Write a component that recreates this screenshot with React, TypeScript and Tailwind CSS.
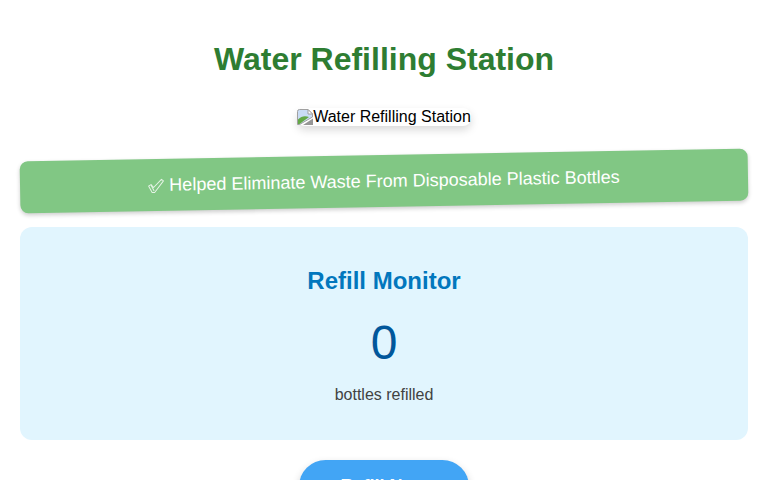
import React from 'react';

const BrokenImageIcon: React.FC = () => (
  <svg width="16" height="16" viewBox="0 0 16 16" className="inline-block align-[-3px]">
    <path d="M0.500 2.500a2 2 0 0 1 2-2H11l4.500 4.500v3L2.500 15.500H0.500z" fill="#c9dcf5" stroke="#a0a0a0" strokeWidth="1" />
    <path d="M1 10.500c3.500-3.500 7-4 11-2.500l-9.500 7H1z" fill="#63a845" />
    <path d="M11 0.500V5h4.500z" fill="#ffffff" stroke="#a0a0a0" strokeWidth="1" />
    <path d="M16 9.500V16H6z" fill="#969696" />
  </svg>
);

const OutlineCheckIcon: React.FC = () => (
  <svg width="16" height="16" viewBox="0 0 16 16" fill="none" stroke="#ffffff" strokeWidth="1" strokeLinejoin="round" className="inline-block align-[-3px] opacity-80">
    <path d="M0.500 8l2.500-1.500 2.500 3L13.500 1.500l2 1.500L6.500 14.500H4z" />
    <path d="M3 7l3 6" />
  </svg>
);

export default function App() {
  return (
    <div className="bg-white p-5 font-['Liberation_Sans',Arial,sans-serif] text-center">
      <h1 className="mt-[21px] mb-[27px] text-[32px] leading-[37px] font-bold text-[#2e7d32]">
        Water Refilling Station
      </h1>

      <div className="inline-block rounded-lg text-base leading-[18px] text-black shadow-[0_4px_8px_rgba(0,0,0,0.15)]">
        <BrokenImageIcon />
        Water Refilling Station
      </div>

      <div className="mt-[26px] -rotate-1 rounded-lg bg-[#81c784] py-[15.5px] text-lg leading-[21px] text-white shadow-[0_2px_4px_rgba(0,0,0,0.2)]">
        <OutlineCheckIcon /> Helped Eliminate Waste From Disposable Plastic Bottles
      </div>

      <div className="mt-5 rounded-xl bg-[#e1f5fe] px-5 py-9">
        <h2 className="my-1 text-2xl leading-7 font-bold text-[#0277bd]">Refill Monitor</h2>
        <div className="mt-5 mb-4 text-5xl leading-[55px] text-[#01579b]">0</div>
        <p className="text-base leading-[18px] text-[#424242]">bottles refilled</p>
      </div>

      <button className="mt-5 w-[170px] rounded-[30px] bg-[#42a5f5] py-4 text-lg leading-[21px] font-bold text-white shadow-[0_4px_8px_rgba(0,0,0,0.2)]">
        Refill Now
      </button>
    </div>
  );
}
